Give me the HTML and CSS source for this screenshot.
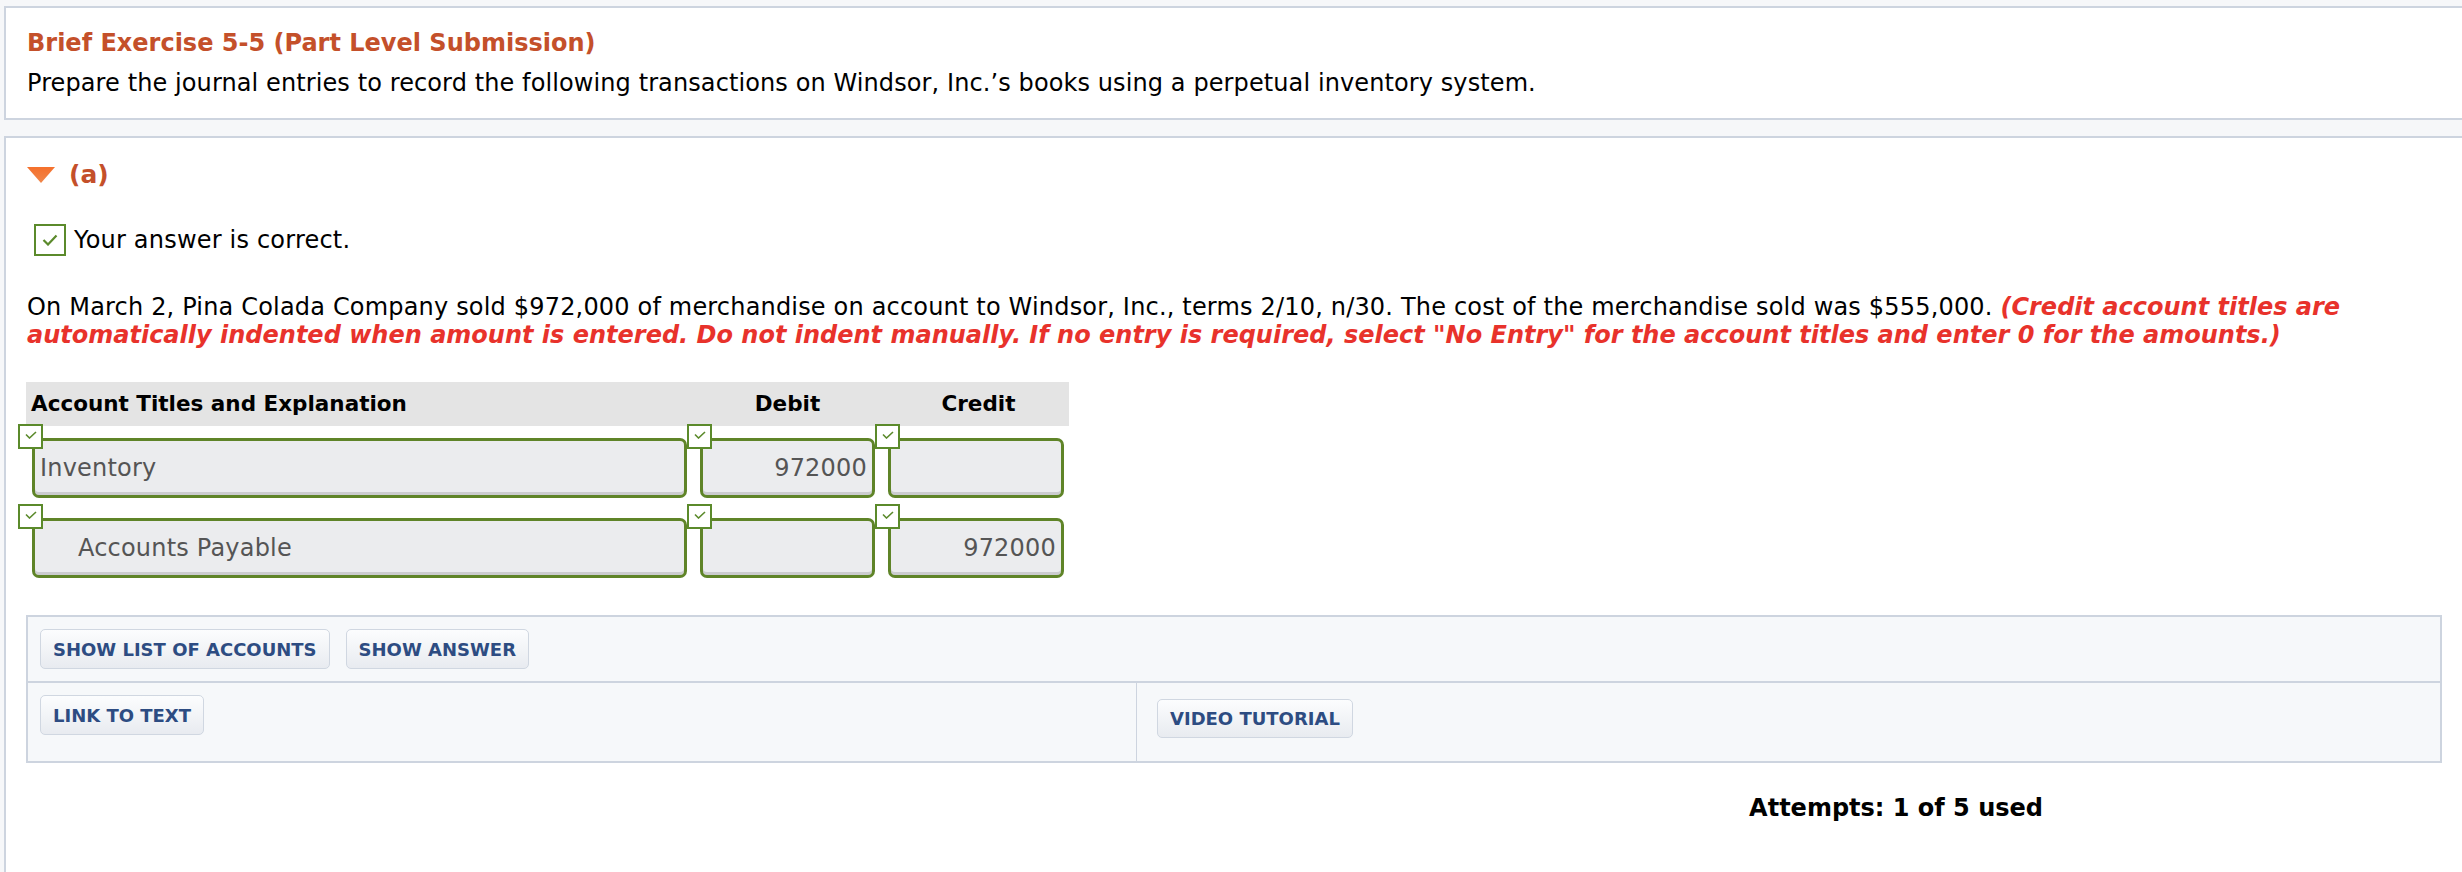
FILE: index.html
```html
<!DOCTYPE html>
<html lang="en">
<head>
<meta charset="utf-8">
<title>Brief Exercise 5-5</title>
<link rel="stylesheet" href="styles.css">
</head>
<body>
<div class="page">
  <section class="box intro">
    <h1 class="title">Brief Exercise 5-5 (Part Level Submission)</h1>
    <p class="lead">Prepare the journal entries to record the following transactions on Windsor, Inc.’s books using a perpetual inventory system.</p>
  </section>

  <section class="box part">
    <div class="part-head">
      <svg class="tri" width="28" height="16" viewBox="0 0 28 16">
        <defs>
          <linearGradient id="tg" x1="0" y1="0" x2="0" y2="1">
            <stop offset="0" stop-color="#f5702c"/>
            <stop offset="1" stop-color="#f0874c"/>
          </linearGradient>
        </defs>
        <polygon points="0,0 28,0 14,16" fill="url(#tg)"/>
      </svg>
      <span>(a)</span>
    </div>

    <div class="status">
      <span class="chk big"><svg width="16" height="12" viewBox="0 0 16 12"><polyline points="1.5,6 6,10.5 14.5,1.5" fill="none" stroke="#5b8a2b" stroke-width="2.2"/></svg></span>
      <span class="status-text">Your answer is correct.</span>
    </div>

    <p class="problem">On March 2, Pina Colada Company sold $972,000 of merchandise on account to Windsor, Inc., terms 2/10, n/30. The cost of the merchandise sold was $555,000. <em class="note">(Credit account titles are automatically indented when amount is entered. Do not indent manually. If no entry is required, select "No Entry" for the account titles and enter 0 for the amounts.)</em></p>

    <div class="journal">
      <div class="jhead">
        <div class="h-acct">Account Titles and Explanation</div>
        <div class="h-amt">Debit</div>
        <div class="h-amt">Credit</div>
      </div>

      <div class="jrow first">
        <div class="cell acct">
          <span class="mini"><svg width="12" height="8" viewBox="0 0 12 8"><polyline points="1,3.5 4.5,7 11,1" fill="none" stroke="#5b8a2b" stroke-width="1.6"/></svg></span>
          <div class="field">Inventory</div>
        </div>
        <div class="cell amt">
          <span class="mini"><svg width="12" height="8" viewBox="0 0 12 8"><polyline points="1,3.5 4.5,7 11,1" fill="none" stroke="#5b8a2b" stroke-width="1.6"/></svg></span>
          <div class="field num">972000</div>
        </div>
        <div class="cell amt wide">
          <span class="mini"><svg width="12" height="8" viewBox="0 0 12 8"><polyline points="1,3.5 4.5,7 11,1" fill="none" stroke="#5b8a2b" stroke-width="1.6"/></svg></span>
          <div class="field num"></div>
        </div>
      </div>

      <div class="jrow">
        <div class="cell acct">
          <span class="mini"><svg width="12" height="8" viewBox="0 0 12 8"><polyline points="1,3.5 4.5,7 11,1" fill="none" stroke="#5b8a2b" stroke-width="1.6"/></svg></span>
          <div class="field indent">Accounts Payable</div>
        </div>
        <div class="cell amt">
          <span class="mini"><svg width="12" height="8" viewBox="0 0 12 8"><polyline points="1,3.5 4.5,7 11,1" fill="none" stroke="#5b8a2b" stroke-width="1.6"/></svg></span>
          <div class="field num"></div>
        </div>
        <div class="cell amt wide">
          <span class="mini"><svg width="12" height="8" viewBox="0 0 12 8"><polyline points="1,3.5 4.5,7 11,1" fill="none" stroke="#5b8a2b" stroke-width="1.6"/></svg></span>
          <div class="field num">972000</div>
        </div>
      </div>
    </div>

    <div class="tools">
      <div class="tools-row">
        <button class="btn">SHOW LIST OF ACCOUNTS</button>
        <button class="btn">SHOW ANSWER</button>
      </div>
      <div class="tools-grid">
        <div class="tools-left"><button class="btn">LINK TO TEXT</button></div>
        <div class="tools-right"><button class="btn">VIDEO TUTORIAL</button></div>
      </div>
    </div>

    <div class="attempts">Attempts: 1 of 5 used</div>
  </section>
</div>
</body>
</html>
```

FILE: styles.css
```css
html, body {
  margin: 0;
  padding: 0;
  overflow: hidden;
  background: #f6f7f9;
}

body {
  font-family: "DejaVu Sans", Verdana, sans-serif;
  color: #000;
  width: 2462px;
  height: 872px;
}

.page {
  padding: 6px 0 0 4px;
}

.box {
  background: #fff;
  border: 2px solid #cdd4df;
  width: 2462px;
  box-sizing: border-box;
}

/* intro box */
.intro {
  padding: 20px 20px 21px 21px;
}

.title {
  margin: 0;
  font-size: 24px;
  line-height: 30px;
  font-weight: bold;
  color: #c4502a;
}

.lead {
  margin: 11px 0 0;
  font-size: 24px;
  line-height: 28px;
  letter-spacing: 0.1px;
}

/* part box */
.part {
  margin-top: 16px;
  padding: 22px 20px 0 20px;
  min-height: 900px;
}

.part-head {
  display: flex;
  align-items: center;
  padding-left: 1px;
  font-size: 25px;
  line-height: 30px;
  font-weight: bold;
  color: #c4502a;
}

.tri {
  display: block;
  margin-right: 14px;
}

.status {
  display: flex;
  align-items: center;
  margin-top: 34px;
  padding-left: 8px;
  font-size: 24px;
  line-height: 28px;
  letter-spacing: 0.2px;
}

.chk {
  display: flex;
  align-items: center;
  justify-content: center;
  box-sizing: border-box;
  background: #fff;
  border: 2px solid #5b8a2b;
}

.chk.big {
  width: 32px;
  height: 32px;
}

.status-text {
  margin-left: 8px;
}

.problem {
  margin: 37px 0 0 1px;
  font-size: 24px;
  line-height: 28px;
  letter-spacing: 0.18px;
}

.note {
  color: #e8322b;
  font-size: 24px;
  font-weight: bold;
  font-style: italic;
  letter-spacing: 0;
}

/* journal */
.journal {
  margin-top: 33px;
}

.jhead {
  display: grid;
  grid-template-columns: 661px 188px 194px;
  width: 1043px;
  height: 44px;
  background: #e4e4e4;
  font-size: 21.5px;
  line-height: 44px;
  font-weight: bold;
}

.h-acct {
  padding-left: 5px;
}

.h-amt {
  padding-left: 13px;
  text-align: center;
}

.jrow {
  display: flex;
  margin: 6px 0 0 -8px;
}

.jrow.first {
  margin-top: -2px;
}

.cell {
  position: relative;
  padding: 14px 0 0 13px;
}

.cell.acct {
  padding-left: 14px;
}

.mini {
  position: absolute;
  top: 0;
  left: 0;
  z-index: 1;
  display: flex;
  align-items: center;
  justify-content: center;
  width: 25px;
  height: 25px;
  box-sizing: border-box;
  background: #fff;
  border: 2px solid #5b8a2b;
  padding-bottom: 4px;
}

.field {
  box-sizing: border-box;
  height: 60px;
  border: 3px solid #5f8428;
  border-radius: 7px;
  background: #ebecee;
  box-shadow: inset 0 -3px 0 #cbcccf;
  padding: 0 6px 0 5px;
  font-size: 24px;
  line-height: 54px;
  letter-spacing: 0.2px;
  color: #555;
  white-space: nowrap;
}

.acct .field {
  width: 655px;
}

.amt .field {
  width: 175px;
}

.amt.wide .field {
  width: 176px;
}

.field.indent {
  padding-left: 43px;
}

.field.num {
  text-align: right;
  padding-right: 5px;
}

/* tools */
.tools {
  margin-top: 37px;
  width: 2416px;
  box-sizing: border-box;
  border: 2px solid #cdd4df;
  background: #f6f8fa;
}

.tools-row {
  display: flex;
  gap: 16px;
  padding: 12px;
  border-bottom: 2px solid #cdd4df;
}

.tools-grid {
  display: grid;
  grid-template-columns: 1109px 1fr;
  height: 78px;
}

.tools-left {
  padding: 12px;
  border-right: 1px solid #cdd4df;
}

.tools-right {
  padding: 16px 0 0 20px;
}

.btn {
  display: block;
  height: 40px;
  padding: 0 12px;
  font-family: "DejaVu Sans", Verdana, sans-serif;
  font-size: 18px;
  font-weight: bold;
  color: #2d4c82;
  background: linear-gradient(#fcfdfe, #e8ebf0);
  border: 1px solid #d0d7e1;
  border-radius: 5px;
}

.tools-right .btn {
  height: 39px;
}

.attempts {
  margin-top: 31px;
  padding-right: 401px;
  text-align: right;
  font-size: 24px;
  line-height: 28px;
  font-weight: bold;
}
```
